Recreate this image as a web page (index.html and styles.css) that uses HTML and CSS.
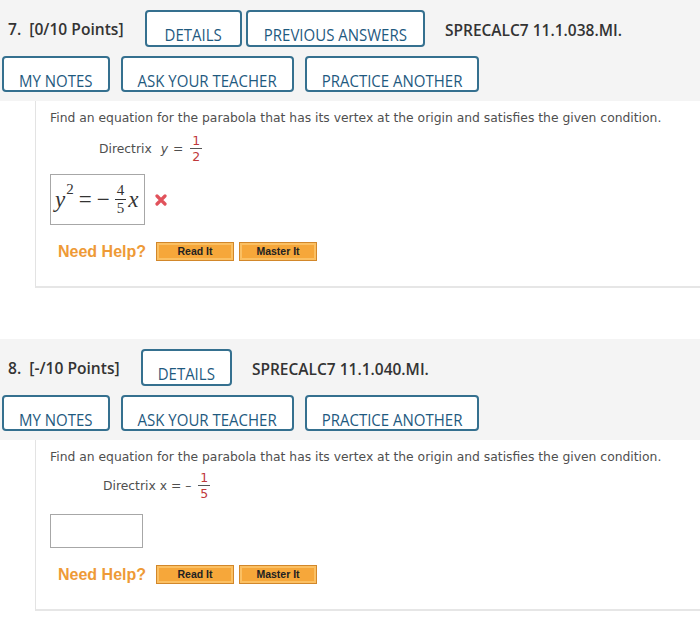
FILE: index.html
```html
<!DOCTYPE html>
<html lang="en">
<head>
  <meta charset="UTF-8" />
  <title>Homework – Parabolas</title>
  <link rel="stylesheet" href="styles.css">
</head>
<body>

  <div class="question">
    <div class="q-header">
      <div class="q-row">
        <span class="q-num">7.&nbsp; [0/10 Points]</span>
        <span class="btn btn-wide"><span class="btn-label">DETAILS</span></span>
        <span class="btn btn-mid"><span class="btn-label">PREVIOUS ANSWERS</span></span>
        <span class="q-code">SPRECALC7 11.1.038.MI.</span>
      </div>
      <div class="q-row row-tools">
        <span class="btn"><span class="btn-label">MY NOTES</span></span>
        <span class="btn"><span class="btn-label">ASK YOUR TEACHER</span></span>
        <span class="btn"><span class="btn-label">PRACTICE ANOTHER</span></span>
      </div>
    </div>

    <div class="q-body">
      <p class="prompt">Find an equation for the parabola that has its vertex at the origin and satisfies the given condition.</p>
      <div class="given">
        Directrix&nbsp; <i>y</i> =
        <span class="frac"><span class="num">1</span><span class="den">2</span></span>
      </div>
      <div class="answer-row">
        <div class="answer-box">
          <span class="mvar">y</span><sup class="msup">2</sup>
          <span class="mop">=</span>
          <span class="mop">&minus;</span>
          <span class="mfrac"><span>4</span><span class="mden">5</span></span>
          <span class="mvar">x</span>
        </div>
        <svg class="wrong" width="12" height="12" viewBox="0 0 12 12">
          <path d="M2 2 L10 10 M10 2 L2 10" stroke="#e1525b" stroke-width="3.2" stroke-linecap="round"/>
        </svg>
      </div>
      <div class="help">
        <span class="help-label">Need Help?</span>
        <span class="help-btn">Read It</span>
        <span class="help-btn">Master It</span>
      </div>
    </div>
  </div>

  <div class="question">
    <div class="q-header">
      <div class="q-row">
        <span class="q-num">8.&nbsp; [-/10 Points]</span>
        <span class="btn"><span class="btn-label">DETAILS</span></span>
        <span class="q-code">SPRECALC7 11.1.040.MI.</span>
      </div>
      <div class="q-row row-tools">
        <span class="btn"><span class="btn-label">MY NOTES</span></span>
        <span class="btn"><span class="btn-label">ASK YOUR TEACHER</span></span>
        <span class="btn"><span class="btn-label">PRACTICE ANOTHER</span></span>
      </div>
    </div>

    <div class="q-body">
      <p class="prompt">Find an equation for the parabola that has its vertex at the origin and satisfies the given condition.</p>
      <div class="given given-wide">
        Directrix x = &ndash;
        <span class="frac"><span class="num">1</span><span class="den">5</span></span>
      </div>
      <div class="answer-row answer-row-low">
        <div class="answer-box empty"></div>
      </div>
      <div class="help">
        <span class="help-label">Need Help?</span>
        <span class="help-btn">Read It</span>
        <span class="help-btn">Master It</span>
      </div>
    </div>
  </div>

</body>
</html>
```

FILE: styles.css
```css
body {
  margin: 0;
  padding: 0;
  background: white;
  color: #333;
  font-family: 'Open Sans', 'DejaVu Sans', sans-serif;
}

.question {
  margin-bottom: 51px;
}

.question:last-child {
  margin-bottom: 0;
}

/* Header band */
.q-header {
  background: #f4f4f4;
  padding: 10px 0 9px 0;
}

.q-row {
  display: flex;
  align-items: flex-start;
  gap: 4px;
}

.row-tools {
  margin-top: 9px;
  padding-left: 2px;
  gap: 11px;
}

.q-num {
  font-size: 15.6px;
  font-weight: 600;
  color: #333;
  padding: 9px 17px 0 8px;
  line-height: 20px;
}

.q-code {
  font-size: 15.5px;
  font-weight: 600;
  color: #333;
  padding: 10px 0 0 16px;
  line-height: 20px;
}

.btn {
  display: inline-block;
  box-sizing: border-box;
  height: 37px;
  padding: 12px 15px 0 15px;
  border: 2px solid #35708f;
  border-radius: 4px;
  background: white;
  color: #1f5a7f;
  font-size: 15px;
  line-height: 20px;
}

.btn-label {
  display: inline-block;
  transform: scaleY(1.12);
}

.row-tools .btn {
  height: 36px;
}

.btn-wide {
  padding: 12px 18px 0 18px;
}

.btn-mid {
  padding: 12px 16px 0 16px;
}

/* Question body */
.q-body {
  margin-left: 35px;
  border-left: 1px solid #e3e3e3;
  border-bottom: 2px solid #e6e6e6;
  padding: 9px 0 25px 14px;
  font-family: Verdana, 'DejaVu Sans', sans-serif;
  font-size: 12.35px;
  color: #4f4f4f;
}

.prompt {
  margin: 0;
  line-height: 16px;
}

.given {
  display: flex;
  align-items: center;
  gap: 5px;
  padding-left: 49px;
  margin-top: 7px;
  line-height: 16px;
}

.given-wide {
  padding-left: 53px;
  margin-top: 5px;
}

.given i {
  font-style: italic;
}

.frac {
  display: inline-flex;
  flex-direction: column;
  align-items: center;
  color: #c0393b;
  font-size: 12.5px;
  line-height: 15px;
  padding: 0 2px;
}

.frac .num {
  border-bottom: 1px solid #555;
  padding: 0 2px;
}

.answer-row {
  display: flex;
  align-items: center;
  gap: 10px;
  margin-top: 10px;
}

.answer-row-low {
  margin-top: 13px;
}

.answer-box {
  box-sizing: border-box;
  width: 95px;
  height: 51px;
  border: 1.5px solid #a7a7a7;
  display: flex;
  align-items: center;
  padding-left: 4px;
  font-family: 'Liberation Serif', 'DejaVu Serif', serif;
  font-size: 23px;
  color: #333;
}

.answer-box.empty {
  width: 93px;
  height: 34px;
}

.mvar {
  font-style: italic;
}

.msup {
  font-size: 15px;
  align-self: flex-start;
  margin-top: 6px;
  margin-left: 1px;
  line-height: 16px;
}

.mop {
  margin-left: 5px;
}

.mfrac {
  display: inline-flex;
  flex-direction: column;
  align-items: center;
  font-size: 15px;
  line-height: 17px;
  margin: 0 2px 0 5px;
}

.mden {
  border-top: 1px solid #333;
  padding: 0 2px;
}

.wrong {
  margin-top: 1px;
}

/* Need help */
.help {
  display: flex;
  align-items: center;
  gap: 5px;
  margin-top: 17px;
  padding-left: 8px;
}

.help-label {
  font-family: 'Liberation Sans', Arial, sans-serif;
  font-weight: bold;
  font-size: 16px;
  color: #ee9a37;
  margin-right: 5px;
}

.help-btn {
  display: inline-block;
  box-sizing: border-box;
  width: 78px;
  height: 19px;
  background: #f6a73a;
  border: 1px solid #d2872a;
  box-shadow: inset 0 0 0 2px #fbc063;
  text-align: center;
  font-family: 'Liberation Sans', Arial, sans-serif;
  font-weight: bold;
  font-size: 10.5px;
  line-height: 17px;
  color: #222;
}
```
